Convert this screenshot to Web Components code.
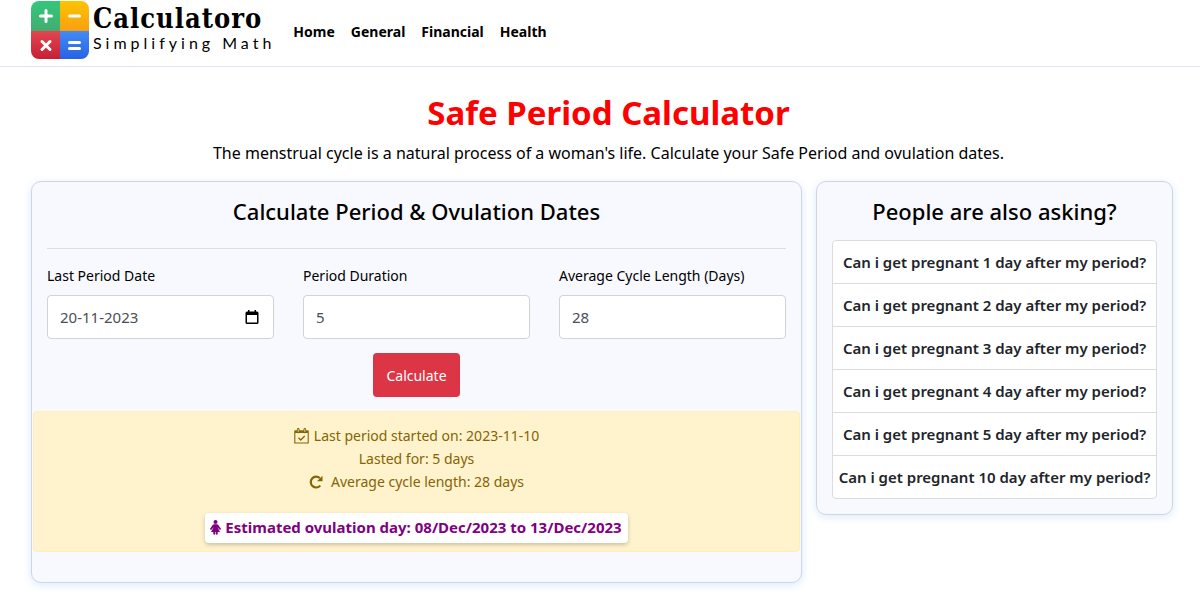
<!DOCTYPE html>
<html lang="en">
<head>
<meta charset="utf-8">
<meta name="viewport" content="width=device-width, initial-scale=1">
<title>Safe Period Calculator</title>
<style>
  :root {
    --card-bg: #f8f9ff;
    --card-border: #cfd6e2;
    --field-border: #ced4da;
    --danger: #dc3545;
    --warning-bg: #fff3cd;
    --warning-text: #856404;
  }

  body {
    margin: 0;
    background: #fff;
    color: #000;
    font-family: "Noto Sans", "Open Sans", sans-serif;
    font-size: 14px;
    line-height: 23px;
  }
</style>
</head>
<body>
<safe-period-app></safe-period-app>

<script>
class SiteLogo extends HTMLElement {
  constructor() {
    super();

    this.attachShadow({ mode: 'open' });

    this.shadowRoot.innerHTML = `
      <style>
        :host {
          display: block;
        }

        a {
          display: flex;
          gap: 4px;
          color: #000;
          text-decoration: none;
        }

        svg {
          width: 58px;
          height: 58px;
          margin-top: 1px;
        }

        .name {
          display: block;
          padding-top: 3px;
          font: bold 27px/32px "DejaVu Serif Condensed", "DejaVu Serif", serif;
          letter-spacing: 1px;
        }

        .tagline {
          display: block;
          font: 16px/16px "Lato", sans-serif;
          letter-spacing: 4px;
        }
      </style>

      <a href="#">
        <svg viewBox="0 0 58 58" aria-hidden="true">
          <defs>
            <clipPath id="tile"><rect width="58" height="58" rx="8"/></clipPath>
            <linearGradient id="green" x2="0" y2="1"><stop stop-color="#34c77b"/><stop offset="1" stop-color="#41ad70"/></linearGradient>
            <linearGradient id="yellow" x2="0" y2="1"><stop stop-color="#fcc400"/><stop offset="1" stop-color="#f99f10"/></linearGradient>
            <linearGradient id="red" x2="0" y2="1"><stop stop-color="#e34650"/><stop offset="1" stop-color="#c61f35"/></linearGradient>
            <linearGradient id="blue" x2="0" y2="1"><stop stop-color="#428bf5"/><stop offset="1" stop-color="#2862e5"/></linearGradient>
          </defs>
          <g clip-path="url(#tile)">
            <path fill="url(#green)" d="M0 0h29v30H0z"/>
            <path fill="url(#yellow)" d="M29 0h29v30H29z"/>
            <path fill="url(#red)" d="M0 30h29v28H0z"/>
            <path fill="url(#blue)" d="M29 30h29v28H29z"/>
          </g>
          <path fill="none" stroke="#fff" stroke-width="3" stroke-linecap="round" d="M9.500 15h11M15 9.500v11M38.500 15h10M11 40.500l8 8M19 40.500l-8 8M38.500 41.500h10M38.500 47.500h10"/>
        </svg>
        <span>
          <span class="name">Calculatoro</span>
          <span class="tagline">Simplifying Math</span>
        </span>
      </a>
    `;
  }
}

class SiteHeader extends HTMLElement {
  constructor() {
    super();

    this.attachShadow({ mode: 'open' });

    this.shadowRoot.innerHTML = `
      <style>
        :host {
          display: block;
          border-bottom: 1px solid #e4e6ef;
        }

        header {
          display: flex;
          align-items: flex-start;
          gap: 18px;
          min-height: 66px;
          padding: 0 27px 0 31px;
        }

        nav {
          display: flex;
          gap: 16px;
          padding-top: 20px;
          font-weight: 700;
        }

        ::slotted(a) {
          color: #000;
          text-decoration: none;
        }
      </style>

      <header>
        <site-logo></site-logo>
        <nav><slot></slot></nav>
      </header>
    `;
  }
}

class InfoCard extends HTMLElement {
  constructor() {
    super();

    this.attachShadow({ mode: 'open' });

    this.shadowRoot.innerHTML = `
      <style>
        :host {
          display: block;
          background: var(--card-bg);
          border: 1px solid var(--card-border);
          border-radius: 10px;
          box-shadow: 0 2px 8px rgba(13, 110, 253, 0.15);
        }

        h2 {
          margin: 0;
          padding: 14px 15px;
          font-size: 22px;
          line-height: 30px;
          font-weight: 500;
          text-align: center;
        }
      </style>

      <h2></h2>
      <slot></slot>
    `;

    this.titleElement = this.shadowRoot.querySelector('h2');
  }

  static get observedAttributes() {
    return ['data-title'];
  }

  attributeChangedCallback(name, oldValue, newValue) {
    if (oldValue === newValue) return;
    this.titleElement.textContent = newValue;
  }
}

class FormField extends HTMLElement {
  constructor() {
    super();

    this.attachShadow({ mode: 'open' });

    this.shadowRoot.innerHTML = `
      <style>
        :host {
          display: block;
        }

        label {
          display: block;
          margin-bottom: 8px;
        }

        .box {
          display: flex;
          align-items: center;
          box-sizing: border-box;
          height: 44px;
          padding: 0 12px;
          background: #fff;
          border: 1px solid var(--field-border);
          border-radius: 4px;
        }

        input {
          flex: 1;
          min-width: 0;
          padding: 0;
          border: 0;
          outline: 0;
          background: none;
          color: #495057;
          font: inherit;
          font-size: 15px;
        }

        button {
          display: flex;
          padding: 0 2px;
          border: 0;
          background: none;
          color: #000;
        }

        button[hidden] {
          display: none;
        }

        svg {
          width: 14px;
          height: 14px;
        }
      </style>

      <label for="field"></label>
      <div class="box">
        <input id="field" type="text">
        <button type="button" aria-label="Open calendar" hidden>
          <svg viewBox="0 0 14 14" aria-hidden="true">
            <path fill="currentColor" fill-rule="evenodd" d="M3 0h1.500v1.500h5V0H11v1.500h1A1.500 1.500 0 0 1 13.500 3v9.500A1.500 1.500 0 0 1 12 14H2A1.500 1.500 0 0 1 .5 12.500V3A1.500 1.500 0 0 1 2 1.500h1zM2 5v7.500h10V5z"/>
          </svg>
        </button>
      </div>
    `;
  }

  connectedCallback() {
    this.shadowRoot.querySelector('label').textContent = this.dataset.label;
    this.shadowRoot.querySelector('input').value = this.dataset.value;
    this.shadowRoot.querySelector('button').hidden = !this.hasAttribute('data-calendar');
  }
}

class PeriodForm extends HTMLElement {
  constructor() {
    super();

    this.attachShadow({ mode: 'open' });

    this.shadowRoot.innerHTML = `
      <style>
        :host {
          display: block;
          padding: 0 15px;
        }

        hr {
          margin: 8px 0 15px;
          border: 0;
          border-top: 1px solid #dcdee5;
        }

        .fields {
          display: grid;
          grid-template-columns: repeat(3, minmax(0, 1fr));
          gap: 29px;
        }

        button {
          display: block;
          height: 44px;
          margin: 14px auto;
          padding: 0 13px;
          border: 0;
          border-radius: 4px;
          background: var(--danger);
          color: #fff;
          font: inherit;
        }
      </style>

      <form>
        <hr>
        <div class="fields">
          <form-field data-label="Last Period Date" data-value="20-11-2023" data-calendar></form-field>
          <form-field data-label="Period Duration" data-value="5"></form-field>
          <form-field data-label="Average Cycle Length (Days)" data-value="28"></form-field>
        </div>
        <button type="submit">Calculate</button>
      </form>
    `;

    this.shadowRoot.querySelector('form').addEventListener('submit', event => {
      event.preventDefault();
    });
  }
}

class PeriodResult extends HTMLElement {
  constructor() {
    super();

    this.attachShadow({ mode: 'open' });

    this.shadowRoot.innerHTML = `
      <style>
        :host {
          display: block;
          margin: 0 1px 30px;
          padding: 12px 15px 8px;
          background: var(--warning-bg);
          border: 1px solid #ffeeba;
          border-radius: 4px;
          color: var(--warning-text);
          text-align: center;
        }

        p {
          display: flex;
          justify-content: center;
          align-items: center;
          gap: 5px;
          margin: 0;
        }

        p.cycle {
          gap: 8px;
        }

        strong {
          display: inline-flex;
          align-items: center;
          gap: 4px;
          margin-top: 20px;
          padding: 3px 6px 4px 5px;
          background: #fff;
          border-radius: 4px;
          box-shadow: 0 2px 4px rgba(0, 0, 0, 0.2);
          color: purple;
          font-size: 15px;
        }
      </style>

      <p>
        <svg width="15" height="16" viewBox="0 0 15 16" fill="none" stroke="currentColor" aria-hidden="true">
          <path d="M.8 3h13.400v12H.8z" stroke-width="1.100"/>
          <path d="M1 3.800h13" stroke-width="2.400"/>
          <path d="M4.200 1.300v2.700M10.800 1.300v2.700" stroke-width="2.600" stroke-linecap="round"/>
          <path d="M4.200 1.200v2.600M10.800 1.200v2.600" stroke="#fff3cd" stroke-width=".8"/>
          <path d="M4.500 9.800l2.200 2.200 4-4" stroke-width="1.300"/>
        </svg>
        Last period started on: 2023-11-10
      </p>
      <p>Lasted for: 5 days</p>
      <p class="cycle">
        <svg width="14" height="14" viewBox="0 0 14 14" aria-hidden="true">
          <path d="M11.300 10.600A5.400 5.400 0 1 1 10.800 3.100" fill="none" stroke="currentColor" stroke-width="2.200"/>
          <path d="M13.500.8v5.400H8.100z" fill="currentColor"/>
        </svg>
        Average cycle length: 28 days
      </p>
      <strong>
        <svg width="11" height="15" viewBox="0 0 11 15" fill="currentColor" aria-hidden="true">
          <circle cx="5.500" cy="2" r="2"/>
          <path d="M4 4.300h3c.6 0 1 .3 1.300.7l2.500 3.600c.5.900-.8 1.800-1.500.9L7.700 7.300v.5L10 12H7.700v2c0 1-1.700 1-1.900 0v-2h-.6v2c-.2 1-1.900 1-1.900 0v-2H1l2.300-4.200v-.5L1.700 9.500c-.7.900-2 0-1.500-.9L2.700 5c.3-.4.7-.7 1.300-.7z"/>
        </svg>
        Estimated ovulation day: 08/Dec/2023 to 13/Dec/2023
      </strong>
    `;
  }
}

class QuestionList extends HTMLElement {
  constructor() {
    super();

    this.attachShadow({ mode: 'open' });

    this.shadowRoot.innerHTML = `
      <style>
        :host {
          display: block;
          padding: 0 15px 15px;
        }

        ul {
          margin: 0;
          padding: 0;
          list-style: none;
          background: #fff;
          border: 1px solid #dcdcdc;
          border-radius: 4px;
        }

        li + li {
          border-top: 1px solid #dcdcdc;
        }

        a {
          display: block;
          padding: 10px 4px 9px;
          color: #212529;
          font-size: 15px;
          font-weight: 600;
          text-align: center;
          text-decoration: none;
        }
      </style>

      <ul></ul>
    `;
  }

  connectedCallback() {
    const days = this.dataset.days.split(',');
    this.shadowRoot.querySelector('ul').innerHTML = days
      .map(day => `<li><a href="#">Can i get pregnant ${day} day after my period?</a></li>`)
      .join('');
  }
}

class SafePeriodApp extends HTMLElement {
  constructor() {
    super();

    this.attachShadow({ mode: 'open' });

    this.shadowRoot.innerHTML = `
      <style>
        :host {
          display: block;
        }

        main {
          padding: 22px 27px 10px 31px;
        }

        .intro {
          margin: 0 -13px 16px 0;
          text-align: center;
        }

        h1 {
          margin: 0;
          color: red;
          font-size: 33px;
          line-height: 48px;
          font-weight: 700;
        }

        .intro p {
          margin: 4px 0 0;
          font-size: 16px;
          line-height: 24px;
        }

        .columns {
          display: grid;
          grid-template-columns: minmax(0, 771fr) minmax(0, 357fr);
          align-items: start;
          gap: 14px;
        }
      </style>

      <site-header>
        <a href="#">Home</a>
        <a href="#">General</a>
        <a href="#">Financial</a>
        <a href="#">Health</a>
      </site-header>
      <main>
        <div class="intro">
          <h1>Safe Period Calculator</h1>
          <p>The menstrual cycle is a natural process of a woman's life. Calculate your Safe Period and ovulation dates.</p>
        </div>
        <div class="columns">
          <info-card data-title="Calculate Period &amp; Ovulation Dates">
            <period-form></period-form>
            <period-result></period-result>
          </info-card>
          <info-card data-title="People are also asking?">
            <question-list data-days="1,2,3,4,5,10"></question-list>
          </info-card>
        </div>
      </main>
    `;
  }
}

customElements.define('site-logo', SiteLogo);
customElements.define('site-header', SiteHeader);
customElements.define('info-card', InfoCard);
customElements.define('form-field', FormField);
customElements.define('period-form', PeriodForm);
customElements.define('period-result', PeriodResult);
customElements.define('question-list', QuestionList);
customElements.define('safe-period-app', SafePeriodApp);
</script>
</body>
</html>
